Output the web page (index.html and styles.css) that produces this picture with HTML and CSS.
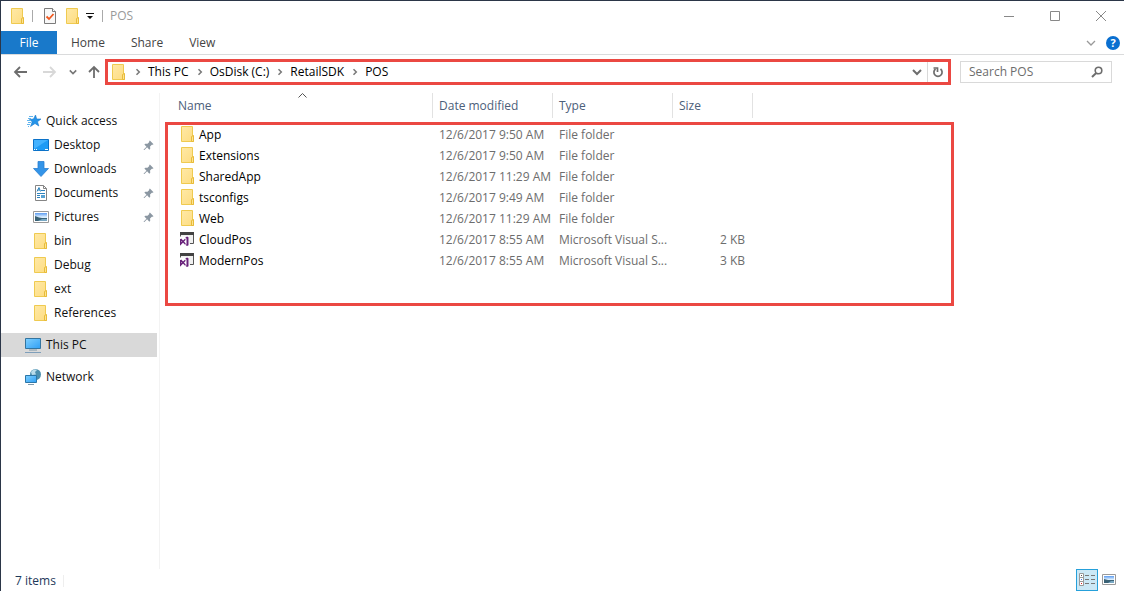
FILE: index.html
```html
<!DOCTYPE html>
<html lang="en">

	<head>
		<meta charset="UTF-8">
		<title>POS</title>
		<link rel="stylesheet" href="styles.css">
	</head>

	<body>
		<!-- shared icons -->
		<svg class="sprite" aria-hidden="true">
			<defs>
				<linearGradient id="gFolder" x1="0" y1="0" x2="1" y2="1">
					<stop offset="0" stop-color="#ffe9a6" />
					<stop offset="1" stop-color="#fddc81" />
				</linearGradient>
				<linearGradient id="gScreen" x1="0" y1="0" x2="1" y2="1">
					<stop offset="0" stop-color="#7fd0ff" />
					<stop offset="1" stop-color="#2f9ff5" />
				</linearGradient>
				<linearGradient id="gPhoto" x1="0" y1="0" x2="0" y2="1">
					<stop offset="0" stop-color="#5b9bf0" />
					<stop offset="0.5" stop-color="#dcefff" />
				</linearGradient>
			</defs>
			<symbol id="folder" viewBox="0 0 16 16">
				<path d="M1.5 0.5h11v9.500h1v5.500h-12z" fill="url(#gFolder)" stroke="#efca50" />
				<path d="M11.500 15.500v-5l2-1v6z" fill="#fde48f" stroke="#e8bb3a" />
			</symbol>
			<symbol id="vs" viewBox="0 0 16 16">
				<path d="M0 4h14v9H0z" fill="#f0f0f0" />
				<path d="M0 1h14v3H0z" fill="#424242" />
				<path d="M0.500 4v2M13.500 4v8.500H10" fill="none" stroke="#555" />
				<path d="M0 5.500h9V15H0z" fill="#fff" />
				<path d="M0.700 8v5l4.600-4.800M0.700 8l4.600 5" fill="none" stroke="#68217a" stroke-width="1.400" />
				<path d="M5 7l2-1.500 1.500 0.700v8L7 15l-2-1.500h1.500v-6z" fill="#68217a" />
			</symbol>
			<symbol id="pin" viewBox="0 0 12 12">
				<path d="M7.500 0.500l4 4-1 0.800-0.900-0.200-1.900 2 0.200 2.400-1 1L4.500 8 1.500 11H0.800v-0.700l3-3L1.500 5l1-1 2.400 0.200 2-1.900-0.200-0.900z" fill="#8b97a2" />
			</symbol>
			<symbol id="picture" viewBox="0 0 16 16">
				<path d="M0.500 2.500h15v11h-15z" fill="#fff" stroke="#9a9a9a" />
				<path d="M2 4h12v8H2z" fill="url(#gPhoto)" />
				<path d="M2 7l4 1.500 3 0.500h5v3H2z" fill="#3a6275" />
				<path d="M5 12l4-2h5v2z" fill="#78a8c4" />
			</symbol>
			<symbol id="crumb" viewBox="0 0 8 8">
				<path d="M2.500 1.200L5.300 4 2.500 6.800" fill="none" stroke="#777" stroke-width="1.500" />
			</symbol>
			<symbol id="down" viewBox="0 0 10 10">
				<path d="M1 3l4 4 4-4" fill="none" stroke="currentColor" stroke-width="2" />
			</symbol>
		</svg>

		<div class="window">
			<header class="titlebar">
				<svg class="icon"><use href="#folder" /></svg>
				<span class="bar"></span>
				<button class="quick" aria-label="Properties">
					<svg class="icon" viewBox="0 0 16 16">
						<path d="M2.500 0.500h8l3 3v12h-11z" fill="#f8f8f8" stroke="#7b7b7b" />
						<path d="M10.500 0.500v3h3" fill="#fff" stroke="#7b7b7b" />
						<path d="M4.500 8.500L7 11l4.500-5" fill="none" stroke="#f0581f" stroke-width="1.800" />
					</svg>
				</button>
				<button class="quick" aria-label="New folder"><svg class="icon"><use href="#folder" /></svg></button>
				<button class="quick more" aria-label="Customize Quick Access Toolbar">
					<svg width="8" height="6" viewBox="0 0 8 6"><path d="M0 0h8v1H0zM1 3h6L4 6z" fill="#111" /></svg>
				</button>
				<span class="bar"></span>
				<span class="title">POS</span>
				<div class="controls">
					<button aria-label="Minimize"><svg width="12" height="12"><path d="M1 6.500h10" stroke="#888" /></svg></button>
					<button aria-label="Maximize"><svg width="12" height="12"><path d="M1.500 1.500h9v9h-9z" fill="none" stroke="#888" /></svg></button>
					<button aria-label="Close"><svg width="12" height="12"><path d="M1 1l10 10M11 1L1 11" stroke="#888" /></svg></button>
				</div>
			</header>

			<nav class="tabs">
				<button class="tab file">File</button>
				<button class="tab">Home</button>
				<button class="tab">Share</button>
				<button class="tab">View</button>
				<div class="ribbon-tools">
					<button aria-label="Expand the Ribbon"><svg width="10" height="10" viewBox="0 0 10 10"><path d="M1 3l4 4 4-4" fill="none" stroke="#999" stroke-width="1.300" /></svg></button>
					<button class="help" aria-label="Help">?</button>
				</div>
			</nav>

			<div class="toolbar">
				<div class="history">
					<button class="arrow" aria-label="Back"><svg width="14" height="14"><path d="M14 7H2M7 2L2 7l5 5" fill="none" stroke="#6d6d6d" stroke-width="1.800" /></svg></button>
					<button class="arrow" aria-label="Forward" disabled><svg width="14" height="14"><path d="M0 7h12M7 2l5 5-5 5" fill="none" stroke="#d8d8d8" stroke-width="1.800" /></svg></button>
					<button class="recent" aria-label="Recent locations"><svg width="8" height="8" viewBox="0 0 10 10"><use href="#down" /></svg></button>
					<button class="up" aria-label="Up"><svg width="14" height="14"><path d="M7 13V2M2 7l5-5 5 5" fill="none" stroke="#6d6d6d" stroke-width="1.800" /></svg></button>
				</div>
				<div class="address">
					<svg class="icon"><use href="#folder" /></svg>
					<svg class="sep"><use href="#crumb" /></svg>
					<a href="#">This PC</a>
					<svg class="sep"><use href="#crumb" /></svg>
					<a href="#">OsDisk (C:)</a>
					<svg class="sep"><use href="#crumb" /></svg>
					<a href="#">RetailSDK</a>
					<svg class="sep"><use href="#crumb" /></svg>
					<a href="#">POS</a>
					<button class="previous" aria-label="Previous locations"><svg width="10" height="10"><use href="#down" /></svg></button>
					<button class="refresh" aria-label="Refresh">
						<svg width="12" height="12"><path d="M3.500 3A4.100 4.100 0 1 0 8.500 3" fill="none" stroke="#6d6d6d" stroke-width="1.700" /><path d="M1.500 2h4v4" fill="none" stroke="#6d6d6d" stroke-width="1.700" /></svg>
					</button>
				</div>
				<div class="search">
					<input type="search" placeholder="Search POS" aria-label="Search POS">
					<svg width="12" height="12"><circle cx="7.500" cy="4.500" r="3.300" fill="none" stroke="#6d6d6d" stroke-width="1.600" /><path d="M5.200 7L1 11" stroke="#6d6d6d" stroke-width="2" /></svg>
				</div>
			</div>

			<main class="content">
				<nav class="sidebar">
					<a class="item" href="#">
						<svg class="icon" viewBox="0 0 16 16">
							<path d="M10.500 2l1.200 4H16l-3.500 2.700 1.300 4.300-3.800-2.500L5.500 13.500l1.700-4.700L4.500 6.500l4-0.500z" fill="#2493e8" stroke="#1879cc" stroke-width="0.600" />
							<path d="M4 3.500h4M3 5.500h3M2 7.500h4M3 9.500h3M2 11.500h3M3 13.500h1" stroke="#62b5ee" />
						</svg>
						<span>Quick access</span>
					</a>
					<a class="item sub" href="#">
						<svg class="icon" viewBox="0 0 16 16">
							<path d="M0.500 2.500h15v11h-15z" fill="#1e9bf5" stroke="#0b72c8" />
							<path d="M1 3h14L1 12z" fill="#43b2ff" />
							<path d="M1 12.500h1M3 12.500h1M12 12.500h3" stroke="#fff" />
						</svg>
						<span>Desktop</span>
						<svg class="pin"><use href="#pin" /></svg>
					</a>
					<a class="item sub" href="#">
						<svg class="icon" viewBox="0 0 16 16"><path d="M5 0.500h6v7h4.500L8 15.500 0.500 7.500H5z" fill="#3394e8" stroke="#2a7fd0" stroke-width="0.800" /></svg>
						<span>Downloads</span>
						<svg class="pin"><use href="#pin" /></svg>
					</a>
					<a class="item sub" href="#">
						<svg class="icon" viewBox="0 0 16 16">
							<path d="M2.500 0.500h8l3 3v12h-11z" fill="#fff" stroke="#858585" />
							<path d="M10.500 0.500v3h3" fill="none" stroke="#858585" />
							<path d="M4 6.500l2-4 1.500 4M4.500 5h2.500M8 5.500h4M4 8.500h8M4 10.500h3M4 12.500h3" fill="none" stroke="#2f83bd" />
							<path d="M8 10h4v3H8z" fill="#57a2d3" />
						</svg>
						<span>Documents</span>
						<svg class="pin"><use href="#pin" /></svg>
					</a>
					<a class="item sub" href="#">
						<svg class="icon"><use href="#picture" /></svg>
						<span>Pictures</span>
						<svg class="pin"><use href="#pin" /></svg>
					</a>
					<a class="item sub" href="#"><svg class="icon"><use href="#folder" /></svg><span>bin</span></a>
					<a class="item sub" href="#"><svg class="icon"><use href="#folder" /></svg><span>Debug</span></a>
					<a class="item sub" href="#"><svg class="icon"><use href="#folder" /></svg><span>ext</span></a>
					<a class="item sub" href="#"><svg class="icon"><use href="#folder" /></svg><span>References</span></a>
					<a class="item root active" href="#">
						<svg class="icon" viewBox="0 0 16 16">
							<path d="M0.500 1.500h15v10h-15z" fill="url(#gScreen)" stroke="#33749f" />
							<path d="M4 13h8" stroke="#7f9aac" />
							<path d="M0 15.500h16" stroke="#7f9fba" />
						</svg>
						<span>This PC</span>
					</a>
					<a class="item root" href="#">
						<svg class="icon" viewBox="0 0 16 16">
							<circle cx="10.500" cy="5.500" r="5.500" fill="#4c8fae" />
							<path d="M6 3c2-3 5-2.500 6-2l-2 2 1 2.500-4 0.500z" fill="#b9dceb" />
							<path d="M0.500 6.500h11v7h-11z" fill="url(#gScreen)" stroke="#2b76a8" />
							<path d="M3 15.500h6" stroke="#7f9aac" />
						</svg>
						<span>Network</span>
					</a>
				</nav>

				<section class="files">
					<table>
						<colgroup>
							<col class="col-name">
							<col class="col-date">
							<col class="col-type">
							<col class="col-size">
						</colgroup>
						<thead>
							<tr>
								<th><span>Name</span><svg class="sort" width="9" height="5"><path d="M0.500 4.500l4-4 4 4" fill="none" stroke="#555" /></svg></th>
								<th><span>Date modified</span></th>
								<th><span>Type</span></th>
								<th><span>Size</span></th>
							</tr>
						</thead>
						<tbody>
							<tr>
								<td><a href="#"><svg class="icon"><use href="#folder" /></svg>App</a></td>
								<td>12/6/2017 9:50 AM</td>
								<td>File folder</td>
								<td></td>
							</tr>
							<tr>
								<td><a href="#"><svg class="icon"><use href="#folder" /></svg>Extensions</a></td>
								<td>12/6/2017 9:50 AM</td>
								<td>File folder</td>
								<td></td>
							</tr>
							<tr>
								<td><a href="#"><svg class="icon"><use href="#folder" /></svg>SharedApp</a></td>
								<td>12/6/2017 11:29 AM</td>
								<td>File folder</td>
								<td></td>
							</tr>
							<tr>
								<td><a href="#"><svg class="icon"><use href="#folder" /></svg>tsconfigs</a></td>
								<td>12/6/2017 9:49 AM</td>
								<td>File folder</td>
								<td></td>
							</tr>
							<tr>
								<td><a href="#"><svg class="icon"><use href="#folder" /></svg>Web</a></td>
								<td>12/6/2017 11:29 AM</td>
								<td>File folder</td>
								<td></td>
							</tr>
							<tr>
								<td><a href="#"><svg class="icon"><use href="#vs" /></svg>CloudPos</a></td>
								<td>12/6/2017 8:55 AM</td>
								<td>Microsoft Visual S...</td>
								<td>2 KB</td>
							</tr>
							<tr>
								<td><a href="#"><svg class="icon"><use href="#vs" /></svg>ModernPos</a></td>
								<td>12/6/2017 8:55 AM</td>
								<td>Microsoft Visual S...</td>
								<td>3 KB</td>
							</tr>
						</tbody>
					</table>
					<div class="highlight"></div>
				</section>
			</main>

			<footer class="status">
				<span class="count">7 items</span>
				<div class="views">
					<button class="active" aria-label="Details">
						<svg width="16" height="14">
							<path d="M0.500 0.500h4v4h-4zM0.500 4.500h4v4h-4zM0.500 8.500h4v4h-4z" fill="#fff" stroke="#999" />
							<path d="M2 2.500h1" stroke="#555" />
							<path d="M2 6.500h1" stroke="#3c7cf0" />
							<path d="M2 10.500h1" stroke="#d22" />
							<path d="M6 2.500h4M12 2.500h4M6 6.500h4M12 6.500h4M6 10.500h4M12 10.500h4" stroke="#777" />
						</svg>
					</button>
					<button aria-label="Large icons">
						<svg width="14" height="12">
							<path d="M0.500 0.500h13v10h-13z" fill="#fff" stroke="#9a9a9a" />
							<path d="M2 2h10v7H2z" fill="url(#gPhoto)" />
							<path d="M2 5l4 1h6v3H2z" fill="#3a6275" />
							<path d="M6 9l3-2h3v2z" fill="#78a8c4" />
						</svg>
					</button>
				</div>
			</footer>
		</div>
	</body>

</html>
```
FILE: styles.css
```css
* {
	box-sizing: border-box;
}

body {
	margin: 0;
	font: 12px/16px "Segoe UI", "Open Sans", "Noto Sans", sans-serif;
	color: #111;
	background: #fff;
}

button {
	display: flex;
	align-items: center;
	justify-content: center;
	padding: 0;
	border: 0 none;
	background: none;
	font: inherit;
	color: inherit;
}

a {
	color: inherit;
	text-decoration: none;
}

svg {
	display: block;
	flex: none;
}

.sprite {
	position: absolute;
	width: 0;
	height: 0;
}

.icon {
	width: 16px;
	height: 16px;
}

.window {
	display: flex;
	flex-direction: column;
	min-height: 100vh;
	border-top: 1px solid #2b3648;
	border-left: 1px solid #2b3648;
}

/* title bar */
.titlebar {
	display: flex;
	align-items: center;
	height: 30px;
	padding-left: 9px;
}

.bar {
	width: 1px;
	height: 12px;
	margin: 0 5px 0 6px;
	background: #aaa;
}

.quick {
	width: 23px;
	height: 22px;
}

.quick.more {
	width: 12px;
}

.title {
	padding-left: 2px;
	color: #999;
}

.controls {
	display: flex;
	margin-left: auto;
}

.controls button {
	width: 46px;
	height: 29px;
}

/* ribbon tabs */
.tabs {
	display: flex;
	height: 24px;
	border-bottom: 1px solid #dadbdc;
}

.tab {
	padding: 0 12px 0 14px;
	color: #444;
}

.tab.file {
	width: 56px;
	padding: 0;
	color: #fff;
	background: #1979ca;
}

.ribbon-tools {
	display: flex;
	align-items: center;
	gap: 10px;
	margin-left: auto;
	padding-right: 4px;
}

.help {
	width: 14px;
	height: 14px;
	border-radius: 50%;
	color: #fff;
	background: #0a6fd0;
	font-size: 11px;
	font-weight: bold;
}

/* address row */
.toolbar {
	display: flex;
	align-items: center;
	padding: 4px 12px 8px 4px;
}

.history {
	display: flex;
	align-items: center;
	width: 100px;
	color: #777;
}

.arrow {
	width: 30px;
}

.recent {
	width: 16px;
}

.up {
	width: 18px;
	margin-left: 4px;
}

.address {
	display: flex;
	flex: 1;
	align-items: center;
	height: 26px;
	padding-left: 3px;
	border: 3px solid #eb4842;
	color: #000;
}

.sep {
	width: 8px;
	height: 8px;
	margin: 0 6px 0 7px;
}

.previous {
	width: 20px;
	margin-left: auto;
	color: #6d6d6d;
}

.refresh {
	width: 21px;
	height: 20px;
	border-left: 1px solid #d9d9d9;
}

.search {
	display: flex;
	align-items: center;
	width: 152px;
	height: 22px;
	margin-left: 9px;
	padding: 0 8px;
	border: 1px solid #d9d9d9;
}

.search input {
	flex: 1;
	min-width: 0;
	padding: 0;
	border: 0 none;
	outline: none;
	background: none;
	font: inherit;
}

.search input::placeholder {
	color: #6d6d6d;
}

/* body */
.content {
	display: flex;
	flex: 1;
}

.sidebar {
	width: 159px;
	padding: 16px 2px 0 0;
	border-right: 1px solid #f3f3f3;
}

.item {
	display: flex;
	align-items: center;
	gap: 5px;
	height: 24px;
	padding: 0 3px 0 24px;
}

.item.sub {
	padding-left: 32px;
}

.item.root {
	margin-top: 8px;
}

.item.active {
	background: #d9d9d9;
}

.pin {
	width: 11px;
	height: 11px;
	margin-left: auto;
}

.files {
	position: relative;
	flex: 1;
	padding-left: 8px;
}

table {
	width: 585px;
	table-layout: fixed;
	border-collapse: collapse;
}

.col-name {
	width: 265px;
}

.col-date,
.col-type {
	width: 120px;
}

.col-size {
	width: 80px;
}

th {
	position: relative;
	padding: 0 0 6px;
	font-weight: normal;
	text-align: left;
	color: #4c607a;
}

th span {
	display: block;
	padding-left: 6px;
	border-right: 1px solid #e2e2e2;
	line-height: 25px;
}

th:first-child span {
	padding-left: 10px;
}

/* sort mark sits above the heading */
.sort {
	position: absolute;
	top: 0;
	left: 49%;
}

td {
	height: 21px;
	padding: 0 0 0 6px;
	color: #6d6d6d;
	white-space: nowrap;
}

td:first-child {
	padding-left: 12px;
	color: #000;
}

td:last-child {
	padding-right: 8px;
	text-align: right;
}

td a {
	display: flex;
	align-items: center;
	gap: 3px;
}

td .icon {
	margin-bottom: 1px;
}

.highlight {
	position: absolute;
	top: 29px;
	left: 5px;
	right: 170px;
	height: 184px;
	border: 3px solid #eb4842;
	pointer-events: none;
}

/* status bar */
.status {
	display: flex;
	align-items: center;
	justify-content: space-between;
	height: 22px;
	padding: 0 4px 0 14px;
	color: #1e395b;
}

.count {
	margin-top: 2px;
	padding-right: 7px;
	border-right: 1px solid #eee;
	line-height: 12px;
}

.views {
	display: flex;
}

.views button {
	width: 22px;
	height: 22px;
}

.views .active {
	border: 1px solid #26a0da;
	background: #cbe8f6;
}
```
